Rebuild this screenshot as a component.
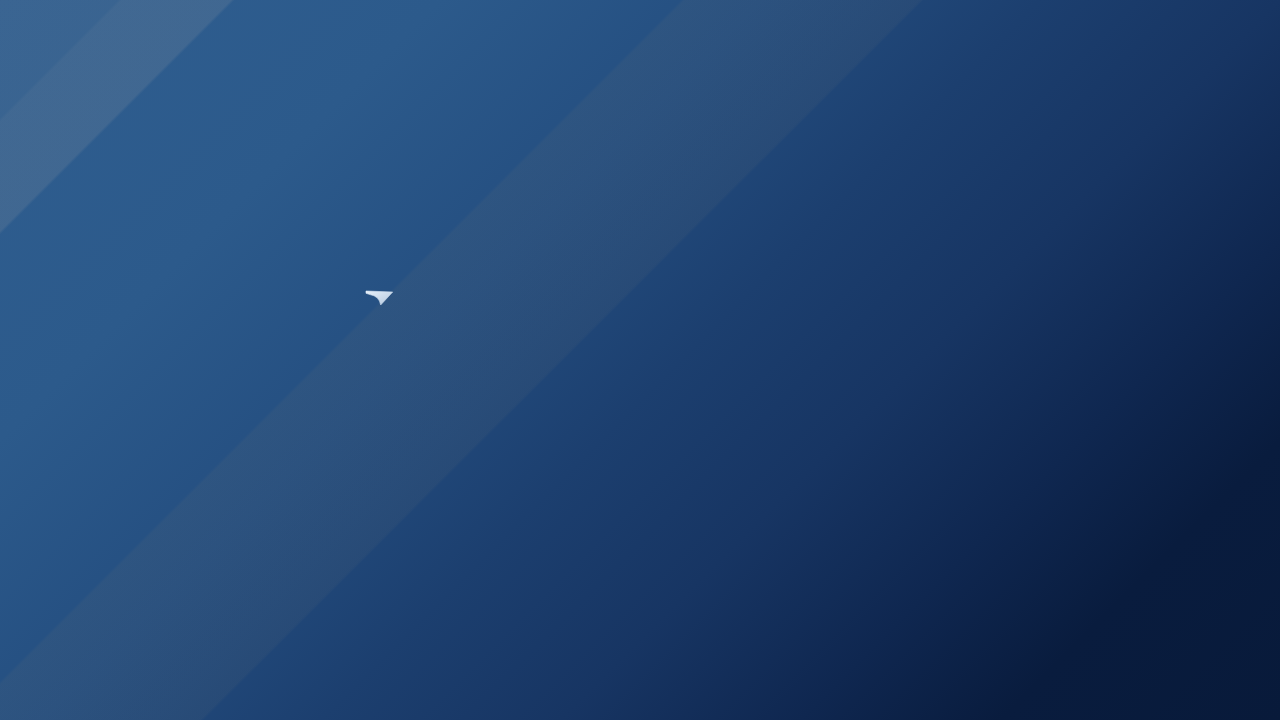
import React from "react";

export default function App() {
  return (
    <div className="w-[1280px] h-[720px] overflow-hidden relative bg-[linear-gradient(135deg,#2f5e90_0%,#2c5a8b_22%,#244e80_38%,#1c3f6f_52%,#173563_64%,#0f2750_76%,#091c3e_86%,#081a3a_100%)]">
      <div className="w-full h-full bg-[linear-gradient(135deg,rgba(140,150,160,0.12)_0%,rgba(140,150,160,0.12)_5.9%,rgba(140,150,160,0.2)_6.1%,rgba(140,150,160,0.2)_11.55%,rgba(140,150,160,0)_11.75%,rgba(140,150,160,0)_34.05%,rgba(90,105,120,0.16)_34.25%,rgba(90,105,120,0.14)_46%,rgba(90,105,120,0)_46.2%,rgba(90,105,120,0)_100%)]" />
      <svg
        className="absolute left-[365px] top-[289px]"
        width="30"
        height="18"
        viewBox="0 0 30 18"
      >
        <defs>
          <linearGradient id="cg" x1="0" y1="0" x2="1" y2="1">
            <stop offset="0%" stopColor="#e6f0fa" />
            <stop offset="100%" stopColor="#b4c8de" />
          </linearGradient>
        </defs>
        <path
          d="M1 2 L27.7 3 L15.7 16 Q14 7 5 5.6 L1 4.3 Z"
          fill="url(#cg)"
          stroke="url(#cg)"
          strokeWidth="0.6"
          strokeLinejoin="round"
        />
      </svg>
    </div>
  );
}
